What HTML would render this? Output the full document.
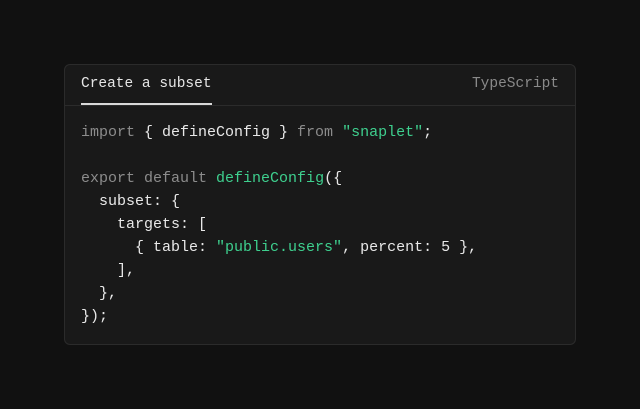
<!DOCTYPE html>
<html><head><meta charset="utf-8"><style>
html,body{margin:0;padding:0;width:640px;height:409px;background:#111111;overflow:hidden}
.card{position:absolute;left:64px;top:64px;width:510px;height:279px;background:#191919;border:1px solid #2b2b2b;border-radius:6px}
.hdr{position:absolute;left:0;top:0;right:0;height:40px;border-bottom:1px solid #2b2b2b;font-family:"Liberation Mono",monospace;font-size:14.5px}
.tab{position:absolute;left:16px;top:11px;color:#e6e6e6}
.ul{position:absolute;left:16px;top:38px;width:131px;height:2px;background:#d8d8d8}
.lang{position:absolute;right:16px;top:11px;color:#8a8a8a}
pre{position:absolute;left:16px;top:56px;margin:0;font-family:"Liberation Mono",monospace;font-size:15px;line-height:23px;color:#e8e8e8}
.k{color:#8c8c8c}.g{color:#3ecf8e}
</style></head><body>
<div class="card">
<div class="hdr"><span class="tab">Create a subset</span><div class="ul"></div><span class="lang">TypeScript</span></div>
<pre><span class="k">import</span> { defineConfig } <span class="k">from</span> <span class="g">"snaplet"</span>;

<span class="k">export default</span> <span class="g">defineConfig</span>({
  subset: {
    targets: [
      { table: <span class="g">"public.users"</span>, percent: 5 },
    ],
  },
});</pre>
</div>
</body></html>
